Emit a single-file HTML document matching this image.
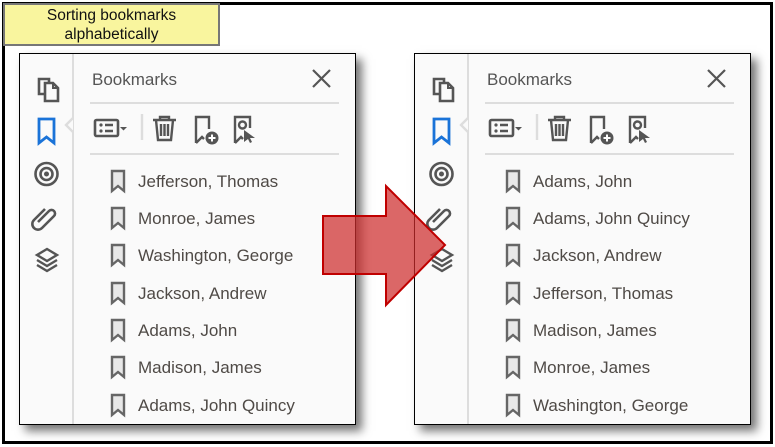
<!DOCTYPE html>
<html><head><meta charset="utf-8"><style>
*{margin:0;padding:0;box-sizing:border-box}
body{width:775px;height:447px;background:#fff;position:relative;overflow:hidden;font-family:"Liberation Sans",sans-serif}
.frame{position:absolute;left:2px;top:2px;width:771px;height:442px;border:3px solid #000}
.note{position:absolute;left:3px;top:3px;width:217px;height:43px;background:#f9f59e;border:2px solid #777;text-align:center;font-size:15.5px;line-height:19px;color:#111;padding-top:1px}
.panel{position:absolute;top:53px;width:337px;height:372px;background:#fafafa;border:1px solid #000;box-shadow:6px 6px 9px rgba(0,0,0,.55)}
.side{position:absolute;left:52px;top:0;width:2px;height:100%;background:#ddd}
.hdr{position:absolute;left:72px;top:16px;font-size:17px;color:#555}
.line{position:absolute;left:70px;width:249px;height:2px;background:#ddd}
.item{position:absolute;left:118px;font-size:17px;color:#4f4a46}
svg{position:absolute;left:0;top:0}
</style></head><body>
<div class="frame"></div>
<div class="note">Sorting bookmarks<br>alphabetically</div>

<div class="panel" style="left:19px">
<div class="side"></div>
<div class="hdr">Bookmarks</div>
<div class="line" style="top:48px"></div>
<div class="line" style="top:99px"></div>
<div class="item" style="top:118px">Jefferson, Thomas</div>
<div class="item" style="top:155px">Monroe, James</div>
<div class="item" style="top:192px">Washington, George</div>
<div class="item" style="top:230px">Jackson, Andrew</div>
<div class="item" style="top:267px">Adams, John</div>
<div class="item" style="top:304px">Madison, James</div>
<div class="item" style="top:342px">Adams, John Quincy</div>
<svg width="337" height="372" fill="none" stroke="#555" stroke-width="2.4">
<use href="#ic"/>
</svg>
</div>

<div class="panel" style="left:414px">
<div class="side"></div>
<div class="hdr">Bookmarks</div>
<div class="line" style="top:48px"></div>
<div class="line" style="top:99px"></div>
<div class="item" style="top:118px">Adams, John</div>
<div class="item" style="top:155px">Adams, John Quincy</div>
<div class="item" style="top:192px">Jackson, Andrew</div>
<div class="item" style="top:230px">Jefferson, Thomas</div>
<div class="item" style="top:267px">Madison, James</div>
<div class="item" style="top:304px">Monroe, James</div>
<div class="item" style="top:342px">Washington, George</div>
<svg width="337" height="372" fill="none" stroke="#555" stroke-width="2.4">
<use href="#ic"/>
</svg>
</div>

<svg width="0" height="0" style="position:absolute">
<defs>
<g id="ic">
<!-- pages -->
<path d="M25 40h-6v-15h10v4" stroke-width="2.6"/><path d="M25 29h8l5 5v13h-13z" stroke-width="2.6"/><path d="M33 29v5h5" stroke-width="2"/>
<!-- bookmark blue -->
<path d="M19 65v24l7.5-6 7.5 6v-24z" stroke="#1a73d8" stroke-width="2.8"/>
<!-- pointer notch -->
<path d="M53 64l-7 7 7 7" stroke="#ddd" fill="#fafafa"/>
<!-- target -->
<circle cx="26.5" cy="120" r="11" stroke-width="2.6"/><circle cx="26.5" cy="120" r="6" stroke-width="2.6"/><circle cx="26.5" cy="120" r="2.5" fill="#555" stroke="none"/>
<!-- clip -->
<path d="M18 168l11-11a3.5 3.5 0 0 1 5 5l-12 12a5.5 5.5 0 0 1-8-8l11-11" stroke-width="2.6"/>
<!-- layers -->
<path d="M27 195l-10 6 10 6 10-6z" stroke-width="2.4"/><path d="M17 206l10 6 10-6" stroke-width="2.4"/><path d="M17 211l10 6 10-6" stroke-width="2.4"/>
<!-- close -->
<path d="M293 16l17 17M310 16l-17 17" stroke-width="2.2"/>
<!-- list icon -->
<rect x="75" y="66" width="23" height="16" rx="1.5" stroke-width="2.6"/><circle cx="81" cy="71" r="1.6" fill="#555" stroke="none"/><circle cx="81" cy="77" r="1.6" fill="#555" stroke="none"/><path d="M85 71h8M85 77h8"/>
<path d="M100 73h7l-3.5 3.5z" fill="#555" stroke="none"/>
<path d="M122 60v26" stroke="#ddd"/>
<!-- trash -->
<path d="M133 66h23M140 66v-3h9v3M136 66l2 20h13l2-20M141 70v12M144.5 70v12M148 70v12" stroke-width="2.4"/>
<!-- new bookmark -->
<path d="M176 89v-26h13v12M176 89l6-6 2 2" stroke-width="2.4"/><circle cx="192" cy="84" r="6.5" fill="#555" stroke="none"/><path d="M188.5 84h7M192 80.5v7" stroke="#fff" stroke-width="2"/>
<!-- bookmark cursor -->
<path d="M215 89v-26h15v11M215 89l6-6 2 2" stroke-width="2.4"/><circle cx="222.5" cy="71" r="3.5"/><path d="M224 76l11 8-5 0 2 4-2 1-2-4-4 3z" fill="#555" stroke="none"/>
<!-- item bookmarks -->
<g stroke="#666" fill="#e8e8e8" stroke-width="2.4">
<path d="M92 117v20l6-5 6 5v-20z"/>
<path d="M92 154v20l6-5 6 5v-20z"/>
<path d="M92 191v20l6-5 6 5v-20z"/>
<path d="M92 229v20l6-5 6 5v-20z"/>
<path d="M92 266v20l6-5 6 5v-20z"/>
<path d="M92 303v20l6-5 6 5v-20z"/>
<path d="M92 341v20l6-5 6 5v-20z"/>
</g>
</g>
</defs>
</svg>

<svg width="775" height="447" style="position:absolute;left:0;top:0">
<polygon points="323,216 386,216 386,186 445,245 386,305 386,274 323,274" fill="rgba(205,45,45,0.72)" stroke="#c00000" stroke-width="2"/>
</svg>
</body></html>
